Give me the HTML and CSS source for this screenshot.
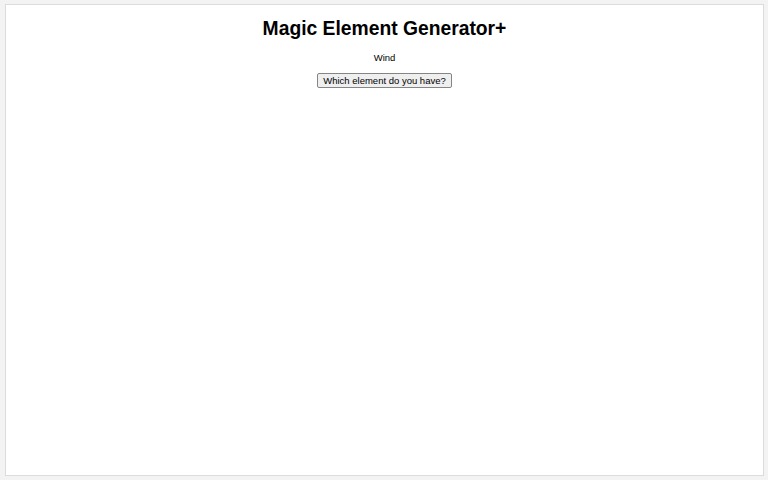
FILE: index.html
```html
<!DOCTYPE html>
<html>
<head>
<meta charset="utf-8">
<link rel="stylesheet" href="styles.css">
</head>
<body>
<div class="panel">
  <h1 class="title">Magic Element Generator+</h1>
  <p class="element">Wind</p>
  <button class="ask">Which element do you have?</button>
</div>
</body>
</html>
```
FILE: styles.css
```css
html, body {
  margin: 0;
  height: 100%;
}
body {
  background: #f3f3f3;
  padding: 4px 4px 4px 5px;
  box-sizing: border-box;
  font-family: "Liberation Sans", Arial, sans-serif;
}
.panel {
  height: 100%;
  box-sizing: border-box;
  background: #fff;
  border: 1px solid #dcdcdc;
  display: flex;
  flex-direction: column;
  align-items: center;
}
.title {
  font-size: 19.3px;
  font-weight: bold;
  margin: 13px 0 0;
  line-height: 21px;
  color: #000;
}
.element {
  font-size: 9.5px;
  margin: 13px 0 0;
  line-height: 11px;
}
.ask {
  font-family: "Liberation Sans", Arial, sans-serif;
  font-size: 9.5px;
  margin-top: 10px;
  padding: 1px 5px;
  line-height: 11px;
  background: #efefef;
  border: 1px solid #858585;
  border-radius: 2px;
  color: #000;
}
```
